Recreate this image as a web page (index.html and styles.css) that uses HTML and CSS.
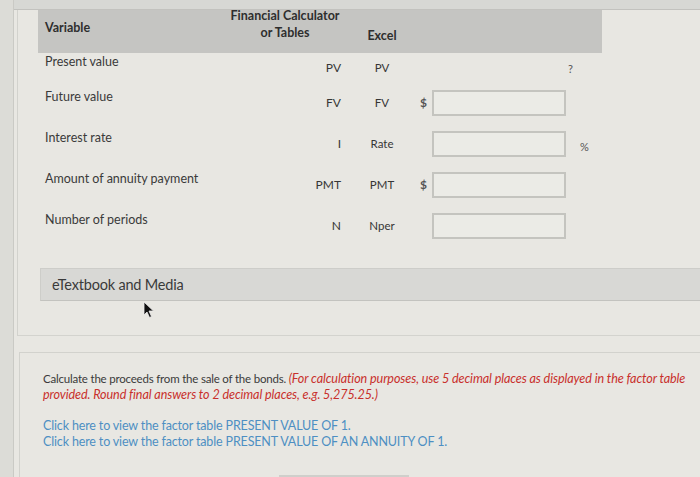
FILE: index.html
```html
<!DOCTYPE html>
<html>
<head>
<meta charset="utf-8">
<link rel="stylesheet" href="styles.css">
</head>
<body>
<div class="page">
  <div class="gutter"></div>
  <div class="main">
    <div class="topband"></div>
    <div class="upper">
      <div class="table">
        <div class="hcell h-var">Variable</div>
        <div class="hcell h-calc"><span class="h-calc-text">Financial Calculator<br>or Tables</span></div>
        <div class="hcell h-excel">Excel</div>
        <div class="hcell"></div>
        <div class="hcell"></div>
        <div class="hcell"></div>

        <div class="row r1">
          <div class="lbl">Present value</div>
          <div class="calc">PV</div>
          <div class="xl">PV</div>
          <div class="cur"></div>
          <div class="inp"></div>
          <div class="suf q">?</div>
        </div>
        <div class="row">
          <div class="lbl">Future value</div>
          <div class="calc">FV</div>
          <div class="xl">FV</div>
          <div class="cur">$</div>
          <div class="inp"><div class="box"></div></div>
          <div class="suf"></div>
        </div>
        <div class="row">
          <div class="lbl">Interest rate</div>
          <div class="calc">I</div>
          <div class="xl">Rate</div>
          <div class="cur"></div>
          <div class="inp"><div class="box"></div></div>
          <div class="suf pct">%</div>
        </div>
        <div class="row">
          <div class="lbl">Amount of annuity payment</div>
          <div class="calc">PMT</div>
          <div class="xl">PMT</div>
          <div class="cur">$</div>
          <div class="inp"><div class="box"></div></div>
          <div class="suf"></div>
        </div>
        <div class="row">
          <div class="lbl">Number of periods</div>
          <div class="calc">N</div>
          <div class="xl">Nper</div>
          <div class="cur"></div>
          <div class="inp"><div class="box"></div></div>
          <div class="suf"></div>
        </div>
      </div>
      <div class="media">eTextbook and Media</div>
    </div>
    <div class="lower">
      <p class="q-text">Calculate the proceeds from the sale of the bonds. <em class="note">(For calculation purposes, use 5 decimal places as displayed in the factor table<br>provided. Round final answers to 2 decimal places, e.g. 5,275.25.)</em></p>
      <div class="links">
        <a class="lnk">Click here to view the factor table PRESENT VALUE OF 1.</a>
        <a class="lnk">Click here to view the factor table PRESENT VALUE OF AN ANNUITY OF 1.</a>
      </div>
      <div class="btnstub"></div>
    </div>
  </div>
</div>
<svg class="cursor" width="12" height="18" viewBox="0 0 12 18"><path d="M1 1 L1 14 L4 11 L6.5 16.5 L8.5 15.5 L6 10 L10.5 10 Z" fill="#111" stroke="#eee" stroke-width="0.8"/></svg>
</body>
</html>
```

FILE: styles.css
```css
html, body {
  margin: 0;
  padding: 0;
}
body {
  width: 700px;
  height: 477px;
  overflow: hidden;
  background: #e8e7e2;
  font-family: Lato, "Open Sans", sans-serif;
  color: #363636;
  position: relative;
}
.page {
  display: flex;
  height: 477px;
}
.gutter {
  width: 13px;
  flex: none;
  background: #dcdcd7;
  border-right: 1px solid #cacac5;
}
.main {
  flex: 1;
  display: flex;
  flex-direction: column;
  min-width: 0;
  overflow: hidden;
}
.topband {
  flex: none;
  height: 9px;
  background: #d7d8d4;
  border-bottom: 1px solid #c2c2be;
}
.upper {
  flex: none;
  margin-left: 3px;
  border-left: 1px solid #d2d2cd;
  border-bottom: 1px solid #d3d3ce;
  padding-left: 20px;
  height: 326px;
  box-sizing: border-box;
}
.table {
  display: grid;
  grid-template-columns: 188px 118px 76px 12px 134px 36px;
  width: 564px;
}
.hcell {
  background: #c5c5c2;
  height: 43px;
  font-weight: 700;
  font-size: 12.5px;
  color: #2e2e2e;
  display: flex;
}
.h-var {
  align-items: center;
  padding-left: 7px;
  padding-bottom: 9px;
  box-sizing: border-box;
}
.h-calc {
  justify-content: center;
  align-items: flex-start;
}
.h-calc-text {
  display: block;
  text-align: center;
  line-height: 17px;
  margin-top: -3px;
}
.h-excel {
  align-items: flex-end;
  justify-content: center;
  padding-bottom: 10px;
  box-sizing: border-box;
}
.row {
  display: contents;
}
.row > div {
  height: 41px;
  display: flex;
  align-items: center;
  font-size: 12px;
}
.r1 > div {
  height: 29px;
}
.row > .lbl {
  padding-left: 7px;
  padding-bottom: 12px;
  box-sizing: border-box;
  font-size: 12.5px;
  color: #3a3a3a;
}
.row > .calc {
  justify-content: flex-end;
  padding-right: 3px;
  box-sizing: border-box;
}
.row > .xl {
  justify-content: center;
  font-size: 11.5px;
}
.row > .cur {
  font-weight: 700;
  font-size: 12px;
  color: #555;
}
.box {
  width: 134px;
  height: 26px;
  box-sizing: border-box;
  border: 2px solid #c4c4bf;
  background: #ebebe6;
}
.row > .q {
  padding-left: 2px;
  padding-top: 2px;
  box-sizing: border-box;
  font-size: 11px;
  color: #555;
}
.row > .pct {
  padding-left: 14px;
  padding-top: 6px;
  box-sizing: border-box;
  font-size: 11px;
  color: #555;
}
.media {
  margin-top: 22px;
  margin-left: 2px;
  height: 33px;
  box-sizing: border-box;
  background: #d8d8d5;
  border: 1px solid #cdcdc9;
  border-bottom-color: #c3c3bf;
  border-right: none;
  display: flex;
  align-items: center;
  padding-left: 11px;
  font-size: 14.5px;
  letter-spacing: -0.2px;
  color: #3a3a3a;
}
.lower {
  flex: none;
  margin-top: 16px;
  margin-left: 5px;
  border-top: 1px solid #d2d2cd;
  border-left: 1px solid #d2d2cd;
  padding-left: 23px;
  padding-top: 18px;
}
.q-text {
  margin: 0;
  font-size: 11.5px;
  line-height: 16px;
  color: #3a3a3a;
  letter-spacing: -0.2px;
  white-space: nowrap;
}
.note {
  color: #c8302c;
  font-size: 12.6px;
  letter-spacing: -0.1px;
}
.links {
  margin-top: 15px;
  display: flex;
  flex-direction: column;
}
.lnk {
  font-size: 12.5px;
  line-height: 16px;
  color: #4d8fc3;
  letter-spacing: -0.15px;
}
.btnstub {
  margin-top: 25px;
  margin-left: 236px;
  width: 130px;
  height: 8px;
  border-top: 2px solid #cfcfcb;
}
.cursor {
  position: absolute;
  left: 143px;
  top: 301px;
}
```
